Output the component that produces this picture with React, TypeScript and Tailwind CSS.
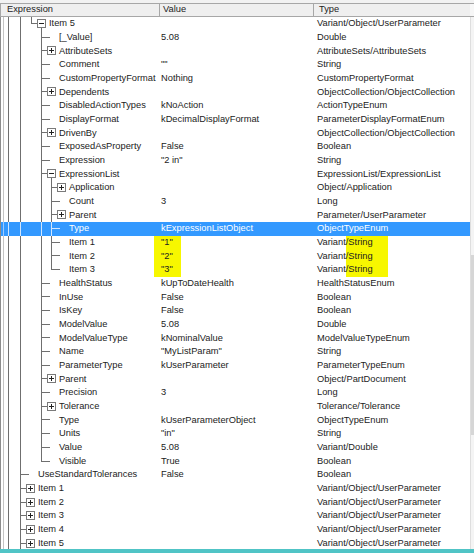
import React from "react";

type Row = {
  lvl: 0 | 1 | 2 | 3;
  label: string;
  value?: string;
  type: string;
  box?: "+" | "-";
  last?: boolean;
  sel?: boolean;
  hl?: boolean;
};

const H = 13.68;
const MID = 6.5;

// x of the vertical guide lines that pass through a row, per level
const VERTS: Record<number, number[]> = {
  0: [7],
  1: [7, 19],
  2: [7, 19],
  3: [7, 19, 40],
};
const CONN = [19, 30, 40, 50];

const rows: Row[] = [
  { lvl: 1, label: "Item 5", type: "Variant/Object/UserParameter", box: "-", last: true },
  { lvl: 2, label: "[_Value]", value: "5.08", type: "Double" },
  { lvl: 2, label: "AttributeSets", type: "AttributeSets/AttributeSets", box: "+" },
  { lvl: 2, label: "Comment", value: '""', type: "String" },
  { lvl: 2, label: "CustomPropertyFormat", value: "Nothing", type: "CustomPropertyFormat" },
  { lvl: 2, label: "Dependents", type: "ObjectCollection/ObjectCollection", box: "+" },
  { lvl: 2, label: "DisabledActionTypes", value: "kNoAction", type: "ActionTypeEnum" },
  { lvl: 2, label: "DisplayFormat", value: "kDecimalDisplayFormat", type: "ParameterDisplayFormatEnum" },
  { lvl: 2, label: "DrivenBy", type: "ObjectCollection/ObjectCollection", box: "+" },
  { lvl: 2, label: "ExposedAsProperty", value: "False", type: "Boolean" },
  { lvl: 2, label: "Expression", value: '"2 in"', type: "String" },
  { lvl: 2, label: "ExpressionList", type: "ExpressionList/ExpressionList", box: "-" },
  { lvl: 3, label: "Application", type: "Object/Application", box: "+" },
  { lvl: 3, label: "Count", value: "3", type: "Long" },
  { lvl: 3, label: "Parent", type: "Parameter/UserParameter", box: "+" },
  { lvl: 3, label: "Type", value: "kExpressionListObject", type: "ObjectTypeEnum", sel: true },
  { lvl: 3, label: "Item 1", value: '"1"', type: "Variant/String", hl: true },
  { lvl: 3, label: "Item 2", value: '"2"', type: "Variant/String", hl: true },
  { lvl: 3, label: "Item 3", value: '"3"', type: "Variant/String", hl: true, last: true },
  { lvl: 2, label: "HealthStatus", value: "kUpToDateHealth", type: "HealthStatusEnum" },
  { lvl: 2, label: "InUse", value: "False", type: "Boolean" },
  { lvl: 2, label: "IsKey", value: "False", type: "Boolean" },
  { lvl: 2, label: "ModelValue", value: "5.08", type: "Double" },
  { lvl: 2, label: "ModelValueType", value: "kNominalValue", type: "ModelValueTypeEnum" },
  { lvl: 2, label: "Name", value: '"MyListParam"', type: "String" },
  { lvl: 2, label: "ParameterType", value: "kUserParameter", type: "ParameterTypeEnum" },
  { lvl: 2, label: "Parent", type: "Object/PartDocument", box: "+" },
  { lvl: 2, label: "Precision", value: "3", type: "Long" },
  { lvl: 2, label: "Tolerance", type: "Tolerance/Tolerance", box: "+" },
  { lvl: 2, label: "Type", value: "kUserParameterObject", type: "ObjectTypeEnum" },
  { lvl: 2, label: "Units", value: '"in"', type: "String" },
  { lvl: 2, label: "Value", value: "5.08", type: "Variant/Double" },
  { lvl: 2, label: "Visible", value: "True", type: "Boolean", last: true },
  { lvl: 0, label: "UseStandardTolerances", value: "False", type: "Boolean" },
  { lvl: 0, label: "Item 1", type: "Variant/Object/UserParameter", box: "+" },
  { lvl: 0, label: "Item 2", type: "Variant/Object/UserParameter", box: "+" },
  { lvl: 0, label: "Item 3", type: "Variant/Object/UserParameter", box: "+" },
  { lvl: 0, label: "Item 4", type: "Variant/Object/UserParameter", box: "+" },
  { lvl: 0, label: "Item 5", type: "Variant/Object/UserParameter", box: "+" },
];

function Gutter({ row }: { row: Row }) {
  const conn = CONN[row.lvl];
  const width = conn + 18;
  const boxL = conn + 6;
  const line = row.sel ? "#cfe5ff" : "#6f6f6f";
  return (
    <svg width={width} height={H} className="shrink-0" shapeRendering="crispEdges">
      <line x1={2.5} y1={0} x2={2.5} y2={H} stroke={row.sel ? "#9fcbff" : "#c4c4c4"} />
      {VERTS[row.lvl].map((x) => (
        <line key={x} x1={x + 0.5} y1={0} x2={x + 0.5} y2={H} stroke={line} />
      ))}
      <line x1={conn + 0.5} y1={0} x2={conn + 0.5} y2={row.last ? MID : H} stroke={line} />
      <line x1={conn + 0.5} y1={MID} x2={row.box ? boxL : conn + 9} y2={MID} stroke={line} />
      {row.box && (
        <g>
          <rect x={boxL + 0.5} y={2.5} width={8} height={8} fill="#fff" stroke="#7a7a7a" />
          <line x1={boxL + 2} y1={MID} x2={boxL + 7} y2={MID} stroke="#222" />
          {row.box === "+" && <line x1={boxL + 4.5} y1={4} x2={boxL + 4.5} y2={9} stroke="#222" />}
          {row.box === "-" && (
            <line x1={boxL + 4.5} y1={11} x2={boxL + 4.5} y2={H} stroke={line} />
          )}
        </g>
      )}
    </svg>
  );
}

function TreeRow({ row }: { row: Row }) {
  const txt = row.sel ? "text-white" : "text-[#222]";
  return (
    <div className={`flex h-[13.68px] items-center ${row.sel ? "bg-[#3399ff]" : ""} ${txt}`}>
      <div className="flex h-full w-[160px] shrink-0 items-center overflow-hidden">
        <Gutter row={row} />
        <span className="whitespace-nowrap">{row.label}</span>
      </div>
      <div className="flex h-full w-[156px] shrink-0 items-center whitespace-nowrap">
        {row.hl ? (
          <span className="-ml-[7px] flex h-full w-[27px] items-center bg-[#f7f700] pl-[7px]">
            {row.value}
          </span>
        ) : (
          row.value
        )}
      </div>
      <div className="flex h-full flex-1 items-center whitespace-nowrap">
        {row.hl ? (
          <>
            <span>Variant</span>
            <span className="flex h-full items-center bg-[#f7f700] pr-[15px]">/String</span>
          </>
        ) : (
          row.type
        )}
      </div>
    </div>
  );
}

export default function App() {
  return (
    <div className="flex h-[553px] w-[474px] flex-col overflow-hidden bg-white font-['Liberation_Sans',Arial,sans-serif] text-[9.3px] leading-none">
      <div className="h-[3px] bg-[#f2f2f2]" />
      <div className="flex h-[14px] shrink-0 border-y border-[#a7a7a7] bg-[#efefef] text-[#222]">
        <div className="flex w-[160px] items-center border-r border-l border-[#a7a7a7] pl-[6px]">
          Expression
        </div>
        <div className="flex w-[154px] items-center border-r border-[#a7a7a7] pl-[3px]">Value</div>
        <div className="flex w-[156px] items-center pl-[5px]">Type</div>
        <div className="flex-1 bg-[#f7f7f7]" />
      </div>
      <div className="flex min-h-0 flex-1">
        <div className="w-[470px] overflow-hidden border-l border-[#8c8c8c]">
          {rows.map((r, i) => (
            <TreeRow key={i} row={r} />
          ))}
        </div>
        <div className="flex w-[4px] flex-col border-l border-[#dedede] bg-[#f4f4f4]">
          <div className="h-[238px]" />
          <div className="h-[180px] bg-[#d6d6d6]" />
        </div>
      </div>
      <div className="h-[4px] shrink-0 bg-[#50c4c6]" />
    </div>
  );
}
